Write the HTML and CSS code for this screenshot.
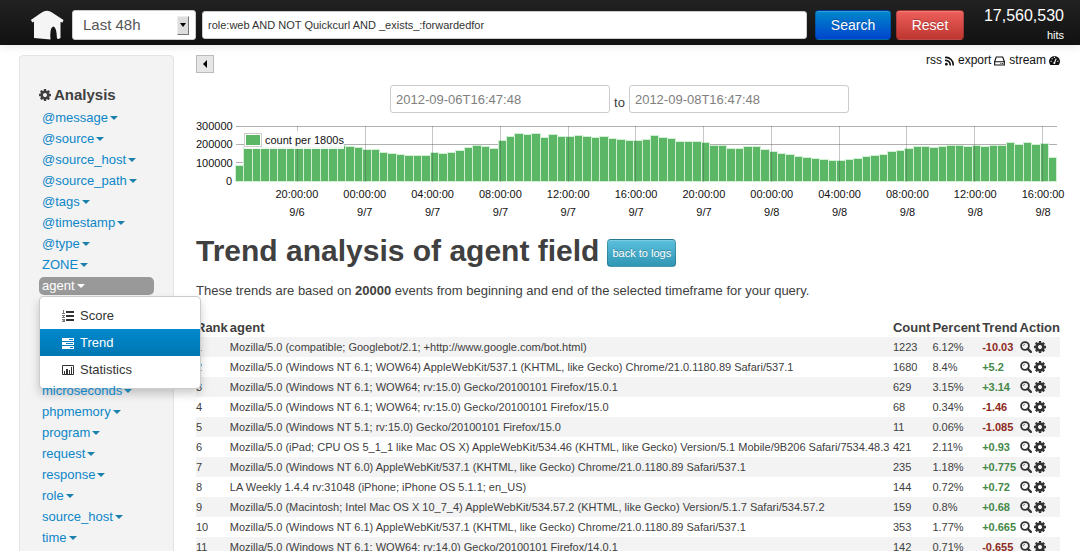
FILE: index.html
```html
<!DOCTYPE html>
<html lang="en">
<head>
    <meta charset="UTF-8">
    <meta name="viewport" content="width=device-width, initial-scale=1.0">
    <title>Trend analysis</title>
    <link rel="stylesheet" href="styles.css">
</head>
<body>
    <svg class="icon-defs" aria-hidden="true">
        <symbol id="cog" viewBox="128 128 1536 1536"><path d="M1152 896q0-106-75-181t-181-75-181 75-75 181 75 181 181 75 181-75 75-181zm512-109v222q0 12-8 23t-20 13l-185 28q-19 54-39 91 35 50 107 138 10 12 10 25t-9 23q-27 37-99 108t-94 71q-12 0-26-9l-138-108q-44 23-91 38-16 136-29 186-7 28-36 28h-222q-14 0-24.500-8.500t-11.500-21.500l-28-184q-49-16-90-37l-141 107q-10 9-25 9-14 0-25-11-126-114-165-168-7-10-7-23 0-12 8-23 15-21 51-66.500t54-70.500q-27-50-41-99l-183-27q-13-2-21-12.500t-8-23.500v-222q0-12 8-23t19-13l186-28q14-46 39-92-40-57-107-138-10-12-10-24 0-10 9-23 26-36 98.500-107.500t94.500-71.500q13 0 26 10l138 107q44-23 91-38 16-136 29-186 7-28 36-28h222q14 0 24.500 8.500t11.500 21.500l28 184q49 16 90 37l142-107q9-9 24-9 13 0 25 10 129 119 165 170 7 8 7 22 0 12-8 23-15 21-51 66.500t-54 70.500q26 50 41 98l183 28q13 2 21 12.500t8 23.500z"/></symbol>
        <symbol id="zoom" viewBox="0 0 12 12"><circle cx="5" cy="5" r="3.900" fill="none" stroke="currentColor" stroke-width="1.800"/><path d="M7.800 7.800l3 3" stroke="currentColor" stroke-width="2.400" stroke-linecap="round"/><path d="M3.400 5a1.700 1.700 0 0 1 1.600-1.600" fill="none" stroke="currentColor" stroke-width=".6"/></symbol>
    </svg>

    <nav class="navbar">
        <a class="home" href="#" aria-label="Home">
            <svg viewBox="0 0 34 30" width="34" height="30"><path d="M.8 10 11 3Q17-1.200 22 2.500L33.500 10l-1 2.500L30.500 12v16l-2 1-1.500-.5Q26.500 17 23.500 16.500 19.500 17 20.500 29.500L4 28V11.500L2.500 12.500z"/></svg>
        </a>
        <span class="select-wrap">
            <select class="timeframe" aria-label="Time frame"><option>Last 48h</option></select>
            <span class="select-arrow"></span>
        </span>
        <input class="query" type="text" aria-label="Query" value="role:web AND NOT Quickcurl AND _exists_:forwardedfor">
        <button class="btn btn-primary" type="button">Search</button>
        <button class="btn btn-danger" type="button">Reset</button>
        <div class="hits">17,560,530<small>hits</small></div>
    </nav>

    <div class="container">
        <aside class="sidebar">
            <h2><svg class="icon"><use href="#cog"/></svg>Analysis</h2>
            <ul class="fields">
                <li><a href="#">@message</a></li>
                <li><a href="#">@source</a></li>
                <li><a href="#">@source_host</a></li>
                <li><a href="#">@source_path</a></li>
                <li><a href="#">@tags</a></li>
                <li><a href="#">@timestamp</a></li>
                <li><a href="#">@type</a></li>
                <li><a href="#">ZONE</a></li>
                <li class="open">
                    <a href="#">agent</a>
                    <ul class="dropdown">
                        <li><a href="#">
                            <svg viewBox="0 0 12 12" width="12" height="12"><path d="M4 1h8v2H4zM4 5h8v2H4zM4 9h8v2H4z"/><path opacity=".65" d="M1 0h1v3H1zM0 3h3v1H0zM0 5h3v1H0zM1 6h1v1H1zM0 7h3v1H0zM0 9h3v1H0zM1 10h2v2H0v-1h1z"/></svg>Score</a></li>
                        <li class="active"><a href="#">
                            <svg viewBox="0 0 12 12" width="12" height="12"><path d="M0 1h12v3H0zM0 5h12v3H0zM0 9h12v3H0z"/><path stroke="#0080c8" d="M7 2.500h4M4 6.500h7M8 10.500h3"/></svg>Trend</a></li>
                        <li><a href="#">
                            <svg viewBox="0 0 12 12" width="12" height="12"><path fill="none" stroke="currentColor" d="M.5 1.500h11v9H.5z"/><path d="M2 7h1v3H2zM4 5h2v5H4zM7 6h1v4H7zM9 3h1v7H9z"/></svg>Statistics</a></li>
                    </ul>
                </li>
                <li><a href="#">microseconds</a></li>
                <li><a href="#">phpmemory</a></li>
                <li><a href="#">program</a></li>
                <li><a href="#">request</a></li>
                <li><a href="#">response</a></li>
                <li><a href="#">role</a></li>
                <li><a href="#">source_host</a></li>
                <li><a href="#">time</a></li>
            </ul>
        </aside>

        <main>
            <div class="toolbar">
                <button class="collapse" type="button" aria-label="Hide sidebar"></button>
                <div class="feeds">
                    <a href="#">rss <svg viewBox="0 0 10 10" width="9" height="10"><circle cx="1.500" cy="8.500" r="1.500"/><path fill="none" stroke="currentColor" stroke-width="1.800" d="M0 4.400A4.700 4.700 0 0 1 5.600 10M0 1.100A8 8 0 0 1 9 10"/></svg></a>
                    <a href="#">export <svg viewBox="0 0 12 10" width="11" height="10"><path fill="none" stroke="currentColor" stroke-width="1.200" d="M.7 5.500 2.500.7h7l1.800 4.800v3.800H.7zM.7 5.800h10.600M7 7.700h1M9 7.700h1"/></svg></a>
                    <a href="#">stream <svg viewBox="0 0 12 11" width="11" height="11"><path d="M1.500 10.500A6 6 0 1 1 10.500 10.500z"/><path stroke="#fff" stroke-width="1.200" d="M1.800 6.500h1M3 3.200l.8.800M6 1.500v1.200M9.200 6.500h1M5.800 8.500l2-5"/><circle cx="5.800" cy="8.300" r="1.100" fill="#fff"/></svg></a>
                </div>
            </div>

            <form class="range">
                <input type="text" aria-label="From" value="2012-09-06T16:47:48">
                <label for="to">to</label>
                <input type="text" id="to" value="2012-09-08T16:47:48">
            </form>

            <div class="chart">
                <div class="y-axis"><span>300000</span><span>200000</span><span>100000</span><span>0</span></div>
                <div class="plot">
                    <div class="bars" id="bars"></div>
                    <div class="ticks" id="ticks"></div>
                    <div class="legend"><i></i>count per 1800s</div>
                </div>
                <div class="x-axis" id="xAxis"></div>
            </div>

            <div class="title">
                <h1>Trend analysis of agent field</h1>
                <button class="btn btn-info" type="button">back to logs</button>
            </div>
            <p class="summary">These trends are based on <b>20000</b> events from beginning and end of the selected timeframe for your query.</p>

            <table class="trends">
                <thead>
                    <tr><th>Rank</th><th class="agent">agent</th><th>Count</th><th>Percent</th><th>Trend</th><th>Action</th></tr>
                </thead>
                <tbody id="rows"></tbody>
            </table>
        </main>
    </div>

    <script>
        // Events per half hour, in thousands
        const counts = [
            82, 180, 182, 185, 184, 186, 188, 190, 190, 188, 190, 190, 191, 187, 180, 167,
            169, 153, 146, 142, 138, 138, 137, 151, 148, 155, 166, 182, 191, 185, 175, 218,
            242, 256, 253, 256, 235, 251, 238, 242, 243, 240, 233, 242, 231, 224, 218, 218,
            222, 246, 235, 229, 213, 211, 213, 207, 191, 191, 173, 175, 187, 185, 167, 158,
            149, 140, 129, 126, 118, 115, 110, 110, 113, 120, 131, 135, 142, 158, 164, 175,
            184, 185, 182, 185, 193, 191, 184, 189, 185, 189, 193, 207, 198, 209, 196, 200, 126
        ];
        document.getElementById('bars').innerHTML = counts
            .map(c => `<i style="height:${c / 3}%"></i>`).join('');

        const hours = ['20', '00', '04', '08', '12', '16', '20', '00', '04', '08', '12', '16'];
        hours.forEach((h, i) => {
            // first tick is 7.2 bars in, then one every 8 bars
            const left = (7.2 + i * 8) / 97 * 100;
            const day = i === 0 ? '9/6' : i < 7 ? '9/7' : '9/8';
            document.getElementById('ticks').innerHTML += `<i style="left:${left}%"></i>`;
            document.getElementById('xAxis').innerHTML += `<span>${h}:00:00<br>${day}</span>`;
        });

        const rows = [
            ['Mozilla/5.0 (compatible; Googlebot/2.1; +http://www.google.com/bot.html)', '1223', '6.12%', '-10.03'],
            ['Mozilla/5.0 (Windows NT 6.1; WOW64) AppleWebKit/537.1 (KHTML, like Gecko) Chrome/21.0.1180.89 Safari/537.1', '1680', '8.4%', '+5.2'],
            ['Mozilla/5.0 (Windows NT 6.1; WOW64; rv:15.0) Gecko/20100101 Firefox/15.0.1', '629', '3.15%', '+3.14'],
            ['Mozilla/5.0 (Windows NT 6.1; WOW64; rv:15.0) Gecko/20100101 Firefox/15.0', '68', '0.34%', '-1.46'],
            ['Mozilla/5.0 (Windows NT 5.1; rv:15.0) Gecko/20100101 Firefox/15.0', '11', '0.06%', '-1.085'],
            ['Mozilla/5.0 (iPad; CPU OS 5_1_1 like Mac OS X) AppleWebKit/534.46 (KHTML, like Gecko) Version/5.1 Mobile/9B206 Safari/7534.48.3', '421', '2.11%', '+0.93'],
            ['Mozilla/5.0 (Windows NT 6.0) AppleWebKit/537.1 (KHTML, like Gecko) Chrome/21.0.1180.89 Safari/537.1', '235', '1.18%', '+0.775'],
            ['LA Weekly 1.4.4 rv:31048 (iPhone; iPhone OS 5.1.1; en_US)', '144', '0.72%', '+0.72'],
            ['Mozilla/5.0 (Macintosh; Intel Mac OS X 10_7_4) AppleWebKit/534.57.2 (KHTML, like Gecko) Version/5.1.7 Safari/534.57.2', '159', '0.8%', '+0.68'],
            ['Mozilla/5.0 (Windows NT 6.1) AppleWebKit/537.1 (KHTML, like Gecko) Chrome/21.0.1180.89 Safari/537.1', '353', '1.77%', '+0.665'],
            ['Mozilla/5.0 (Windows NT 6.1; WOW64; rv:14.0) Gecko/20100101 Firefox/14.0.1', '142', '0.71%', '-0.655']
        ];
        document.getElementById('rows').innerHTML = rows.map(([agent, count, percent, trend], i) => `
            <tr>
                <td>${i + 1}</td><td>${agent}</td><td>${count}</td><td>${percent}</td>
                <td class="${trend[0] === '-' ? 'down' : 'up'}">${trend}</td>
                <td><div class="actions"><a href="#" aria-label="Search"><svg class="icon"><use href="#zoom"/></svg></a><a href="#" aria-label="Settings"><svg class="icon"><use href="#cog"/></svg></a></div></td>
            </tr>`).join('');
    </script>
</body>
</html>
```
FILE: styles.css
```css
:root {
    --text: #404040;
    --link: #0d86c8;
    --stripe: #f3f3f3;
    --bar: #5bb766;
}

* {
    box-sizing: border-box;
}

body {
    margin: 0;
    background: #fff;
    color: var(--text);
    font: 13px/20px "Liberation Sans", Arial, sans-serif;
}

ul {
    margin: 0;
    padding: 0;
    list-style: none;
}

a {
    color: var(--link);
    text-decoration: none;
}

svg {
    fill: currentColor;
}

input,
select,
button {
    margin: 0;
    font-family: inherit;
}

.icon-defs {
    position: absolute;
    width: 0;
    height: 0;
}

.icon {
    width: 12px;
    height: 12px;
}

/* Top bar */
.navbar {
    display: flex;
    align-items: center;
    height: 45px;
    padding: 4px 16px 0 30px;
    background: linear-gradient(#222, #111);
    box-shadow: 0 1px 10px rgba(0, 0, 0, 0.1);
}

.home {
    display: flex;
    margin-right: 8px;
    color: #f5f5f5;
}

.select-wrap {
    position: relative;
    display: flex;
    width: 124px;
    margin-right: 6px;
}

.timeframe {
    width: 100%;
    height: 30px;
    padding: 0 10px;
    appearance: none;
    border: 1px solid #ccc;
    border-radius: 3px;
    background: #fff;
    color: #555;
    font-size: 15px;
}

.select-arrow {
    position: absolute;
    top: 6px;
    right: 7px;
    display: flex;
    align-items: center;
    justify-content: center;
    width: 12px;
    height: 19px;
    border: 1px solid;
    border-color: #eee #777 #777 #eee;
    background: #ddd;
    pointer-events: none;
}

.select-arrow::after {
    border: 3px solid transparent;
    border-top: 4px solid #000;
    border-bottom: 0;
    content: "";
}

.query {
    flex: 1;
    height: 28px;
    min-width: 0;
    margin-right: 8px;
    padding: 0 5px;
    border: 1px solid #ccc;
    border-radius: 3px;
    color: #333;
    font-size: 11px;
}

.btn {
    height: 30px;
    padding: 0 11px;
    border: 1px solid rgba(0, 0, 0, 0.2);
    border-radius: 4px;
    box-shadow: inset 0 1px 0 rgba(255, 255, 255, 0.2);
    color: #fff;
    font-size: 14px;
    text-shadow: 0 -1px 0 rgba(0, 0, 0, 0.25);
}

.btn-primary {
    width: 76px;
    margin-right: 5px;
    background: linear-gradient(#08c, #04c);
}

.btn-danger {
    width: 68px;
    background: linear-gradient(#ee5f5b, #bd362f);
}

.btn-info {
    height: 28px;
    padding: 0 4px;
    background: linear-gradient(#5bc0de, #2f96b4);
    font-size: 11px;
}

.hits {
    width: 100px;
    color: #fff;
    font-size: 16px;
    text-align: right;
}

.hits small {
    display: block;
    font-size: 11px;
    line-height: 18px;
}

.container {
    display: flex;
    gap: 22px;
    padding: 10px 20px 0 19px;
}

/* Field list */
.sidebar {
    flex: 0 0 155px;
    padding: 28px 19px;
    border: 1px solid #e3e3e3;
    border-radius: 4px;
    background: #f3f3f3;
}

.sidebar h2 {
    display: flex;
    align-items: center;
    gap: 3px;
    margin: 0 0 3px;
    font-size: 15px;
    line-height: 22px;
}

.fields > li {
    position: relative;
    height: 21px;
}

.fields > li > a {
    display: block;
    padding-left: 3px;
    border-radius: 5px;
    line-height: 18px;
}

.fields > li > a::after {
    display: inline-block;
    margin: 0 0 2px 2px;
    border: 4px solid transparent;
    border-top-color: #1c80ac;
    border-bottom: 0;
    content: "";
}

.fields > .open {
    margin-bottom: 84px;
}

.fields > .open > a {
    background: #999;
    color: #fff;
}

.fields > .open > a::after {
    border-top-color: #fff;
}

.dropdown {
    position: absolute;
    top: 19px;
    left: 0;
    width: 162px;
    padding: 5px 0;
    border: 1px solid rgba(0, 0, 0, 0.2);
    border-radius: 5px;
    background: #fff;
    box-shadow: 0 5px 10px rgba(0, 0, 0, 0.2);
}

.dropdown a {
    display: flex;
    align-items: center;
    gap: 6px;
    height: 27px;
    padding-left: 22px;
    color: #333;
}

.dropdown .active a {
    background: linear-gradient(#08c, #0077b3);
    color: #fff;
}

main {
    flex: 1;
    min-width: 0;
}

.toolbar {
    display: flex;
    justify-content: space-between;
    height: 30px;
}

.collapse {
    display: flex;
    align-items: center;
    justify-content: center;
    width: 18px;
    height: 18px;
    padding: 0;
    border: 1px solid #bbb;
    background: #e6e6e6;
}

.collapse::after {
    border: 4px solid transparent;
    border-right-color: #000;
    border-left: 0;
    content: "";
}

.feeds {
    display: flex;
    gap: 4px;
    height: 11px;
    font-size: 12px;
    line-height: 11px;
}

.feeds a {
    display: flex;
    align-items: center;
    gap: 3px;
    color: #111;
}

.range {
    display: flex;
    align-items: flex-end;
    justify-content: center;
    gap: 4px;
    padding-right: 17px;
}

.range input {
    width: 220px;
    height: 28px;
    padding: 0 5px;
    border: 1px solid #ccc;
    border-radius: 3px;
    color: #808080;
    font-size: 13px;
}

/* Histogram */
.chart {
    display: grid;
    grid-template-columns: 36px 1fr;
    column-gap: 4px;
    margin-top: 13px;
    padding-right: 3px;
    color: #111;
    font-size: 11px;
    line-height: 18px;
}

.y-axis {
    display: flex;
    flex-direction: column;
    justify-content: space-between;
    height: 73px;
    margin: -9px 0;
    text-align: right;
}

.plot {
    position: relative;
    height: 56px;
    background: repeating-linear-gradient(#b0b0b0 0 1px, transparent 1px 18px);
}

.bars {
    display: flex;
    align-items: flex-end;
    gap: 1px;
    height: 55px;
}

.bars i {
    flex: 1;
    background: var(--bar);
    box-shadow: 0 0 0 1px #d0efd3;
}

.ticks i {
    position: absolute;
    top: 0;
    bottom: 0;
    width: 1px;
    background: rgba(70, 70, 70, 0.3);
}

.legend {
    position: absolute;
    top: 5px;
    left: 8px;
    display: flex;
    align-items: center;
    gap: 3px;
    height: 18px;
    background: rgba(255, 255, 255, 0.9);
}

.legend i {
    width: 18px;
    height: 14px;
    border: 1px solid #ccc;
    outline: 1px solid #fff;
    outline-offset: -2px;
    background: var(--bar);
}

.x-axis {
    display: grid;
    grid-column: 2;
    grid-template-columns: repeat(12, 1fr);
    margin: 3px -20px 0 27px;
    text-align: center;
}

/* Results */
.title {
    display: flex;
    align-items: center;
    gap: 8px;
    margin-top: 12px;
}

h1 {
    margin: 0;
    font-size: 30px;
    line-height: 36px;
}

.title .btn {
    margin-top: 4px;
}

.summary {
    margin: 12px 0 17px;
}

.trends {
    width: 100%;
    border-collapse: collapse;
    font-size: 11px;
    white-space: nowrap;
}

.trends th,
.trends td {
    height: 20px;
    padding: 0 2px 0 0;
    line-height: 18px;
    text-align: left;
}

.trends th {
    height: 19px;
    font-size: 13px;
}

.trends th:last-child {
    padding-right: 0;
}

.trends .agent {
    width: 100%;
}

.trends tbody tr:nth-child(odd) {
    background: var(--stripe);
}

.trends .up,
.trends .down {
    color: #468847;
    font-weight: bold;
}

.trends .down {
    color: #8b2a1c;
}

.actions {
    display: flex;
    gap: 2px;
}

.actions a {
    display: flex;
    color: #333;
}
```
